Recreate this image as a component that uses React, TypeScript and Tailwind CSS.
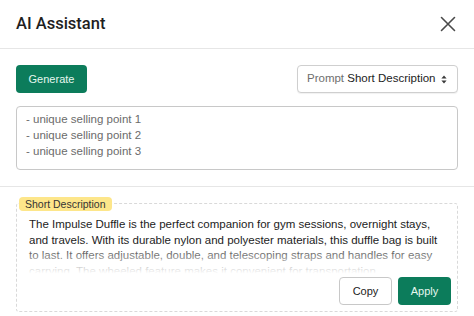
import React from "react"

const description =
  "The Impulse Duffle is the perfect companion for gym sessions, overnight stays, and travels. With its durable nylon and polyester materials, this duffle bag is built to last. It offers adjustable, double, and telescoping straps and handles for easy carrying. The wheeled feature makes it convenient for transportation."

function CloseIcon() {
  return (
    <svg width="16" height="16" viewBox="0 0 16 16" fill="none" className="text-[#4a4a4a]">
      <path d="M1.5 1.5L14.5 14.5M14.5 1.5L1.5 14.5" stroke="currentColor" strokeWidth="1.6" strokeLinecap="round" />
    </svg>
  )
}

function SortArrows() {
  return (
    <svg width="6" height="9" viewBox="0 0 6 9" className="text-[#3a3a3a]">
      <path d="M3 0.5L5.6 3.6H0.4Z M3 8.5L0.4 5.4H5.6Z" fill="currentColor" />
    </svg>
  )
}

export default function App() {
  return (
    <div className="h-[316px] w-[474px] overflow-hidden bg-white font-['Liberation_Sans',Arial,sans-serif] text-[#222]">
      <header className="flex h-[49px] items-center justify-between border-b border-[#e6e6e6] px-4">
        <h1 className="font-['Roboto',sans-serif] text-[16.5px] font-medium text-[#1f1f1f]">AI Assistant</h1>
        <button type="button" className="flex h-5 w-5 items-center justify-center">
          <CloseIcon />
        </button>
      </header>

      <section className="flex flex-col gap-[13px] border-b border-[#e6e6e6] px-4 py-4">
        <div className="flex items-center justify-between">
          <button
            type="button"
            className="h-7 w-[71px] rounded-[4px] bg-[#0c7c5b] text-[11px] text-[#e6f7ef]"
          >
            Generate
          </button>
          <button
            type="button"
            className="flex h-7 w-[161px] items-center justify-between whitespace-nowrap rounded-[4px] border border-[#cfcfcf] bg-white pl-[9px] pr-[10px] text-[11.5px] shadow-[0_1px_1px_rgba(0,0,0,0.06)]"
          >
            <span>
              <span className="text-[#6e6e6e]">Prompt</span>{" "}
              <span className="text-[#222]">Short Description</span>
            </span>
            <SortArrows />
          </button>
        </div>
        <div className="h-16 rounded-[4px] border border-[#c8c8c8] px-[9px] pt-[4px] text-[11.5px] leading-4 text-[#6b6b6b]">
          <p>- unique selling point 1</p>
          <p>- unique selling point 2</p>
          <p>- unique selling point 3</p>
        </div>
      </section>

      <section className="px-4 pt-4">
        <div className="relative flex flex-col rounded-[3px] border border-dashed border-[#d9d9d9] pb-[6px] pt-[13px]">
          <span className="absolute -top-[7px] left-[2px] z-10 rounded-[4px] bg-[#fde68a] px-[6px] text-[10.5px] leading-[14px] text-[#333]">
            Short Description
          </span>
          <div className="relative h-[60px] overflow-hidden px-3">
            <p className="text-[11.5px] leading-[15.5px] text-[#1c1c1c]">{description}</p>
            <div className="absolute inset-x-0 bottom-0 top-[26px] bg-linear-to-b from-white/0 to-white to-90%" />
          </div>
          <div className="flex justify-end gap-[6px] pr-[6px]">
            <button
              type="button"
              className="h-7 w-[53px] rounded-[4px] border border-[#c8c8c8] bg-white text-[11px] text-[#222]"
            >
              Copy
            </button>
            <button
              type="button"
              className="h-7 w-[53px] rounded-[4px] bg-[#0c7c5b] text-[11px] text-[#e6f7ef]"
            >
              Apply
            </button>
          </div>
        </div>
      </section>
    </div>
  )
}
